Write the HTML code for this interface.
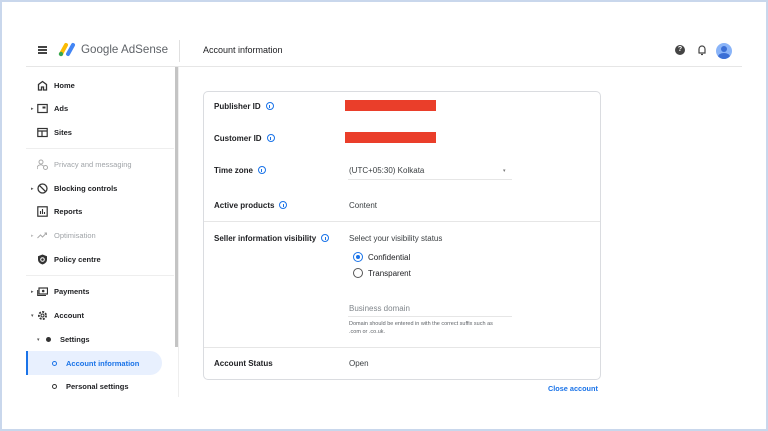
<!DOCTYPE html>
<html><head><meta charset="utf-8"><style>
*{box-sizing:border-box;margin:0;padding:0}
body{width:768px;height:431px;background:#fff;font-family:"Liberation Sans",Arial,sans-serif;color:#3c4043;position:relative;overflow:hidden}
.frame{position:absolute;left:0;top:0;width:768px;height:431px;border:2px solid #c9d7ec}
.a{position:absolute;white-space:nowrap}
.nav{font-size:7.5px;color:#202124;font-weight:bold}
.dis{color:#a0a4a8;font-weight:normal}
.ic{position:absolute;width:11px;height:11px}
.lbl{font-size:8px;font-weight:bold;color:#202124}
.val{font-size:8px;color:#3c4043}
.info{display:inline-block;width:8px;height:8px;border:1.2px solid #1a73e8;border-radius:50%;margin-left:5px;vertical-align:-1px;position:relative}
.info:after{content:"";position:absolute;left:2.3px;top:1.5px;width:1px;height:3.5px;background:#1a73e8}
.red{position:absolute;background:#ea3e2a;height:11px;width:91px;left:345px}
.tri{font-size:5px;color:#555}
</style></head><body>
<div class="frame"></div>
<!-- header -->
<div class="a" style="left:38px;top:46px;width:9px;height:1.5px;background:#444;box-shadow:0 3px 0 #444,0 6px 0 #444"></div>
<svg class="a" style="left:58px;top:42px" width="18" height="15" viewBox="0 0 18 15"><path d="M3 12 L8 3" stroke="#fbbc04" stroke-width="4" stroke-linecap="round"/><circle cx="3" cy="12" r="2.2" fill="#34a853"/><path d="M10 12 L15 3" stroke="#4285f4" stroke-width="4" stroke-linecap="round"/></svg>
<div class="a" style="left:81px;top:43px;font-size:11.6px;color:#5f6368">Google AdSense</div>
<div class="a" style="left:179px;top:40px;width:1px;height:22px;background:#e0e0e0"></div>
<div class="a" style="left:203px;top:45px;font-size:9px;color:#202124">Account information</div>
<div class="a" style="left:675px;top:45px;width:10px;height:10px;border-radius:50%;background:#444;color:#fff;font-size:7px;font-weight:bold;text-align:center;line-height:10px">?</div>
<svg class="a" style="left:697px;top:44px" width="10" height="12" viewBox="0 0 10 12"><path d="M2 9 V5 a3 3 0 0 1 6 0 V9 H1.5 H8.5" fill="none" stroke="#444" stroke-width="1.2"/><path d="M4 10.5 h2" stroke="#444" stroke-width="1.2"/></svg>
<div class="a" style="left:716px;top:43px;width:16px;height:16px;border-radius:50%;background:#8ab4f8;overflow:hidden"><div class="a" style="left:5px;top:3px;width:6px;height:6px;border-radius:50%;background:#3b6fd6"></div><div class="a" style="left:2px;top:10px;width:12px;height:8px;border-radius:50%;background:#3b6fd6"></div></div>
<div class="a" style="left:26px;top:66px;width:716px;height:1px;background:#e6e6e6"></div>
<!-- sidebar -->
<div class="a" style="left:175px;top:67px;width:3px;height:280px;background:#c4c4c4"></div>
<div class="a" style="left:178px;top:67px;width:1px;height:330px;background:#eee"></div>
<div class="a" style="left:26px;top:148px;width:148px;height:1px;background:#eee"></div>
<div class="a" style="left:26px;top:275px;width:148px;height:1px;background:#eee"></div>
<div class="a" style="left:26px;top:351px;width:136px;height:24px;background:#e8f0fe;border-radius:0 12px 12px 0"></div>
<div class="a" style="left:26px;top:351px;width:2px;height:24px;background:#1a73e8"></div>

<svg class="ic a" style="left:37px;top:80px" viewBox="0 0 11 11"><path d="M1.5 10V4.5L5.5 1.5 9.5 4.5V10H6.5V7H4.5V10Z" fill="none" stroke="#333" stroke-width="1.3"/></svg>
<div class="a nav" style="left:54px;top:81px">Home</div>
<div class="a tri" style="left:31px;top:106px">▸</div>
<svg class="ic a" style="left:37px;top:103px" viewBox="0 0 11 11"><rect x="0.8" y="1.5" width="9.4" height="8" fill="none" stroke="#333" stroke-width="1.2"/><rect x="5.5" y="3.5" width="3" height="2" fill="#333"/></svg>
<div class="a nav" style="left:54px;top:104px">Ads</div>
<svg class="ic a" style="left:37px;top:127px" viewBox="0 0 11 11"><rect x="0.8" y="1.5" width="9.4" height="8" fill="none" stroke="#333" stroke-width="1.2"/><path d="M1 4H10M5 4V9" stroke="#333" stroke-width="1.2"/></svg>
<div class="a nav" style="left:54px;top:128px">Sites</div>
<svg class="ic a" style="left:37px;top:159px" viewBox="0 0 11 11"><circle cx="4" cy="3" r="2" fill="none" stroke="#aaa"/><path d="M0.5 10a3.5 3 0 0 1 6 -3" fill="none" stroke="#aaa"/><circle cx="8.5" cy="8.5" r="2" fill="none" stroke="#aaa"/></svg>
<div class="a nav dis" style="left:54px;top:160px">Privacy and messaging</div>
<div class="a tri" style="left:31px;top:186px">▸</div>
<svg class="ic a" style="left:37px;top:183px" viewBox="0 0 11 11"><circle cx="5.5" cy="5.5" r="4.5" fill="none" stroke="#333" stroke-width="1.3"/><path d="M2.3 2.3L8.7 8.7" stroke="#333" stroke-width="1.3"/></svg>
<div class="a nav" style="left:54px;top:184px">Blocking controls</div>
<svg class="ic a" style="left:37px;top:206px" viewBox="0 0 11 11"><rect x="0.8" y="0.8" width="9.4" height="9.4" fill="none" stroke="#333" stroke-width="1.2"/><path d="M3.5 8V5M5.5 8V3M7.5 8V6" stroke="#333" stroke-width="1.1"/></svg>
<div class="a nav" style="left:54px;top:207px">Reports</div>
<div class="a tri" style="left:31px;top:233px;color:#bbb">▸</div>
<svg class="ic a" style="left:37px;top:230px" viewBox="0 0 11 11"><path d="M0.5 8L3.5 5 5.5 7 9.5 3M7.5 3H9.5V5" fill="none" stroke="#aaa" stroke-width="1"/></svg>
<div class="a nav dis" style="left:54px;top:231px">Optimisation</div>
<svg class="ic a" style="left:37px;top:254px" viewBox="0 0 11 11"><path d="M5.5 0.5L10 2.3V5.5C10 8 8 9.8 5.5 10.5 3 9.8 1 8 1 5.5V2.3Z" fill="#333"/><circle cx="5.5" cy="5.5" r="1.8" fill="none" stroke="#fff" stroke-width="1"/></svg>
<div class="a nav" style="left:54px;top:255px">Policy centre</div>
<div class="a tri" style="left:31px;top:289px">▸</div>
<svg class="ic a" style="left:37px;top:286px" viewBox="0 0 11 11"><rect x="2" y="2" width="8.5" height="6" fill="none" stroke="#333" stroke-width="1.2"/><path d="M0.7 4V9.5H9" fill="none" stroke="#333" stroke-width="1.1"/><circle cx="6.2" cy="5" r="1.3" fill="#333"/></svg>
<div class="a nav" style="left:54px;top:287px">Payments</div>
<div class="a tri" style="left:31px;top:313px">▾</div>
<svg class="ic a" style="left:37px;top:310px" viewBox="0 0 11 11"><circle cx="5.5" cy="5.5" r="3.6" fill="none" stroke="#333" stroke-width="1.8" stroke-dasharray="2 1.3"/><circle cx="5.5" cy="5.5" r="1.5" fill="none" stroke="#333" stroke-width="1"/></svg>
<div class="a nav" style="left:54px;top:311px">Account</div>
<div class="a tri" style="left:37px;top:337px">▾</div>
<div class="a" style="left:46px;top:337px;width:5px;height:5px;border-radius:50%;background:#333"></div>
<div class="a nav" style="left:60px;top:335px">Settings</div>
<div class="a" style="left:52px;top:361px;width:5px;height:5px;border-radius:50%;border:1.2px solid #1a73e8"></div>
<div class="a nav" style="left:66px;top:359px;color:#1a73e8">Account information</div>
<div class="a" style="left:52px;top:384px;width:5px;height:5px;border-radius:50%;border:1.2px solid #333"></div>
<div class="a nav" style="left:66px;top:382px">Personal settings</div>

<!-- card -->
<div class="a" style="left:203px;top:91px;width:398px;height:289px;border:1px solid #dadce0;border-radius:5px"></div>
<div class="a" style="left:204px;top:221px;width:396px;height:1px;background:#e6e6e6"></div>
<div class="a" style="left:204px;top:347px;width:396px;height:1px;background:#e6e6e6"></div>
<div class="a lbl" style="left:214px;top:102px">Publisher ID<span class="info"></span></div>
<div class="red" style="top:100px"></div>
<div class="a lbl" style="left:214px;top:134px">Customer ID<span class="info"></span></div>
<div class="red" style="top:132px"></div>
<div class="a lbl" style="left:214px;top:166px">Time zone<span class="info"></span></div>
<div class="a val" style="left:349px;top:166px">(UTC+05:30) Kolkata</div>
<div class="a tri" style="left:503px;top:168px;color:#777">▾</div>
<div class="a" style="left:348px;top:179px;width:164px;height:1px;background:#e6e6e6"></div>
<div class="a lbl" style="left:214px;top:201px">Active products<span class="info"></span></div>
<div class="a val" style="left:349px;top:201px">Content</div>
<div class="a lbl" style="left:214px;top:234px">Seller information visibility<span class="info"></span></div>
<div class="a val" style="left:349px;top:234px">Select your visibility status</div>
<div class="a" style="left:353px;top:252px;width:10px;height:10px;border-radius:50%;border:1.3px solid #1a73e8"><div class="a" style="left:2px;top:2px;width:4px;height:4px;border-radius:50%;background:#1a73e8"></div></div>
<div class="a val" style="left:368px;top:253px;color:#202124">Confidential</div>
<div class="a" style="left:353px;top:268px;width:10px;height:10px;border-radius:50%;border:1.3px solid #555"></div>
<div class="a val" style="left:368px;top:269px;color:#202124">Transparent</div>
<div class="a val" style="left:349px;top:304px;color:#80868b">Business domain</div>
<div class="a" style="left:348px;top:316px;width:164px;height:1px;background:#e6e6e6"></div>
<div class="a" style="left:349px;top:320px;font-size:5.5px;color:#5f6368;line-height:8px">Domain should be entered in with the correct suffix such as<br>.com or .co.uk.</div>
<div class="a lbl" style="left:214px;top:359px">Account Status</div>
<div class="a val" style="left:349px;top:359px">Open</div>
<div class="a" style="left:548px;top:384px;font-size:7.3px;font-weight:bold;color:#1a73e8">Close account</div>
</body></html>
